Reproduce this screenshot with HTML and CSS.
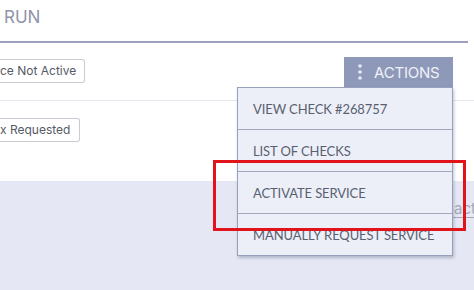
FILE: index.html
```html
<!DOCTYPE html>
<html>
<head>
<meta charset="utf-8">
<link rel="stylesheet" href="styles.css">
</head>
<body>
<div class="page">
  <div class="header"><span class="title">RUN</span></div>
  <div class="row row1">
    <span class="status">ce Not Active</span>
    <div class="actions">
      <button class="actions-btn">
        <svg class="kebab" width="4" height="16" viewBox="0 0 4 16"><circle cx="2" cy="2" r="1.8"/><circle cx="2" cy="8" r="1.8"/><circle cx="2" cy="14" r="1.8"/></svg>
        <span>ACTIONS</span>
      </button>
      <ul class="menu">
        <li>VIEW CHECK #268757</li>
        <li>LIST OF CHECKS</li>
        <li>ACTIVATE SERVICE</li>
        <li>MANUALLY REQUEST SERVICE</li>
      </ul>
      <div class="highlight"></div>
    </div>
  </div>
  <div class="row row2">
    <span class="status status2">x Requested</span>
  </div>
  <div class="panel">
    <span class="panel-link">act</span>
  </div>
</div>
</body>
</html>
```
FILE: styles.css
```css
* { box-sizing: border-box; }
html, body { margin: 0; padding: 0; }
body {
  width: 474px;
  height: 290px;
  overflow: hidden;
  background: #fff;
  font-family: "Inter", "Open Sans", sans-serif;
}
.page { display: flex; flex-direction: column; height: 290px; }
.header {
  height: 43px;
  border-bottom: 2px solid #9ca2bc;
  margin-right: 6px;
  padding-top: 7px;
  padding-left: 4px;
}
.title {
  display: inline-block;
  font-size: 17px;
  color: #8f94a8;
}
.row { display: flex; align-items: flex-start; }
.row1 {
  height: 58px;
  border-bottom: 1px solid #e6e7ee;
  justify-content: space-between;
  padding-top: 16px;
  padding-right: 21px;
}
.status {
  display: inline-block;
  border: 1px solid #c9cbd3;
  border-left: none;
  border-radius: 0 3px 3px 0;
  font-size: 12px;
  color: #555a66;
  padding: 3px 8px 3px 0;
  line-height: 16px;
  white-space: nowrap;
}
.row2 { height: 80px; padding-top: 17px; }
.status2 { padding-right: 9px; }
.actions { position: relative; margin-top: -2px; }
.actions-btn {
  display: flex;
  align-items: center;
  gap: 12px;
  width: 109px;
  height: 30px;
  border: none;
  background: #8e99b9;
  color: #eef1f8;
  font-family: "Inter", "Open Sans", sans-serif;
  font-size: 15px;
  padding: 0 0 0 14px;
  letter-spacing: -0.2px;
}
.kebab { fill: #e6eaf4; }
.menu {
  position: absolute;
  top: 30px;
  right: 0;
  width: 216px;
  margin: 0;
  padding: 0;
  list-style: none;
  background: #eceff8;
  border: 1px solid #98a0bd;
  box-shadow: 1px 2px 3px rgba(80, 90, 120, 0.35);
  z-index: 2;
}
.menu li {
  height: 42px;
  padding-left: 15px;
  display: flex;
  align-items: center;
  font-family: "Lato", sans-serif;
  font-size: 13px;
  color: #5a5f70;
  letter-spacing: -0.1px;
  border-top: 1px solid #a3a9be;
}
.menu li:first-child { border-top: none; height: 41px; }
.highlight {
  position: absolute;
  left: -131px;
  top: 103px;
  width: 253px;
  height: 71px;
  border: 3px solid #e0141a;
  z-index: 3;
}
.panel {
  flex: 1;
  background: #e5e8f4;
  padding-top: 17px;
  padding-left: 453px;
  white-space: nowrap;
}
.panel-link {
  display: inline-block;
  font-size: 15px;
  color: #a4a8b6;
  border-bottom: 1px solid #a4a8b6;
  line-height: 16px;
  padding-left: 1px;
  padding-right: 1px;
}
```
